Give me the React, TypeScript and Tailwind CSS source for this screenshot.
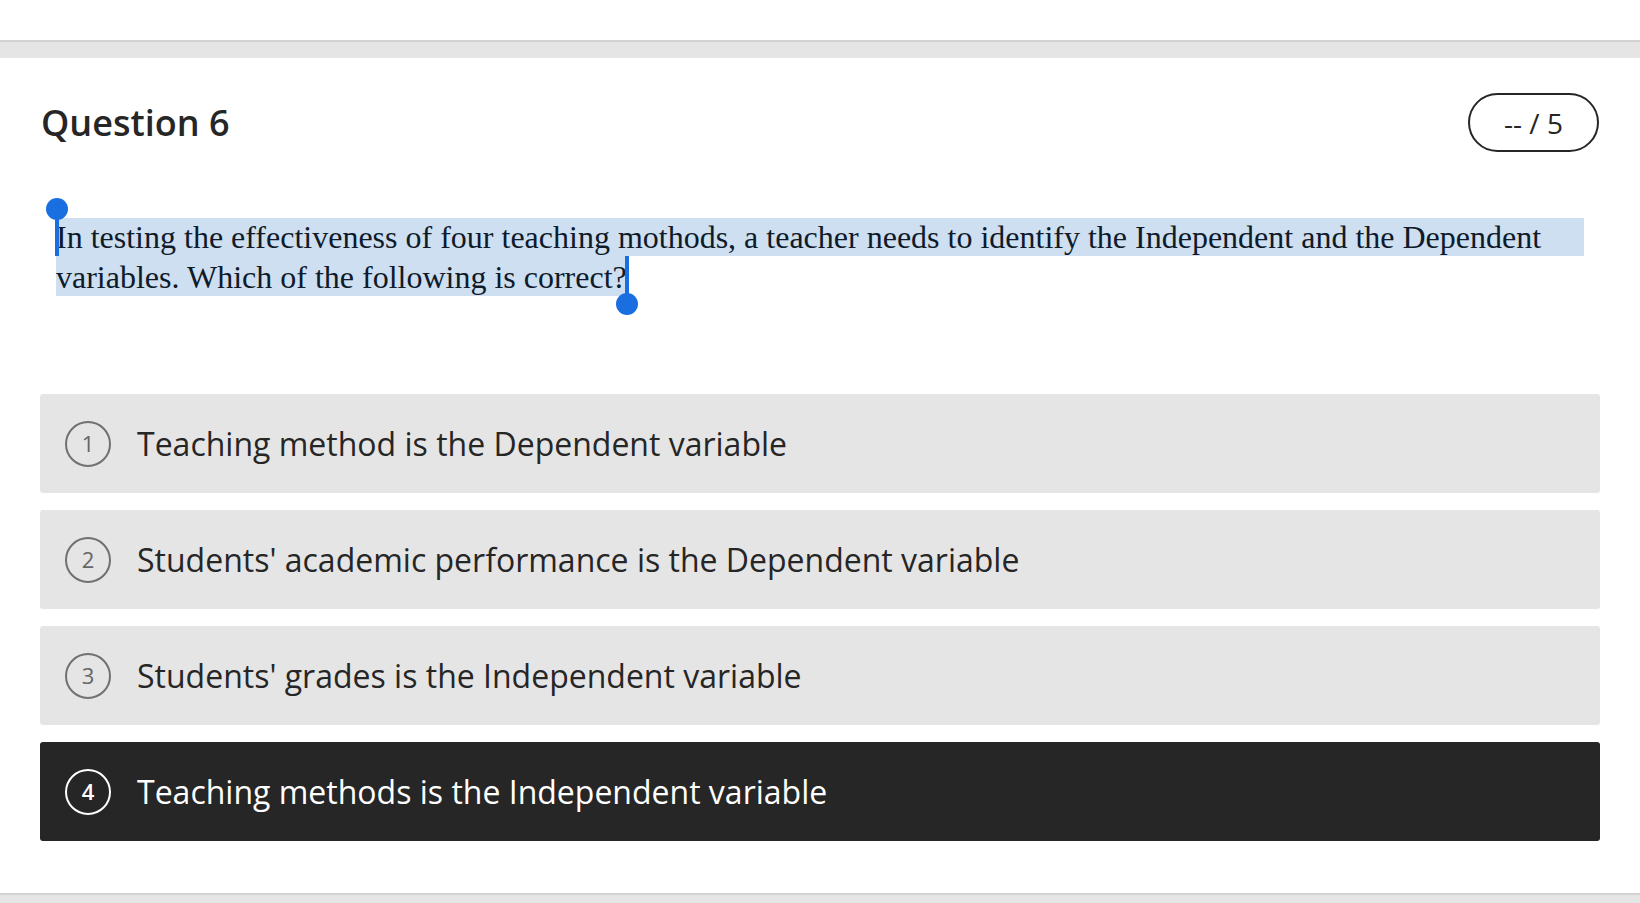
import React from "react";

const options = [
  { n: 1, text: "Teaching method is the Dependent variable" },
  { n: 2, text: "Students' academic performance is the Dependent variable" },
  { n: 3, text: "Students' grades is the Independent variable" },
  { n: 4, text: "Teaching methods is the Independent variable", selected: true },
];

function Option({ n, text, selected }: { n: number; text: string; selected?: boolean }) {
  return (
    <div
      className={`h-[99px] rounded-[3px] flex items-center pl-[25px] ${
        selected ? "bg-[#262626] text-white" : "bg-[#e5e5e5] text-[#262626]"
      }`}
    >
      <div
        className={`w-[46px] h-[46px] rounded-full border-2 flex items-center justify-center text-[22px] ${
          selected ? "border-white text-white font-semibold" : "border-[#707070] text-[#666666]"
        }`}
      >
        {n}
      </div>
      <span className="ml-[26px] text-[32px]">{text}</span>
    </div>
  );
}

export default function App() {
  return (
    <div
      className="w-[1640px] h-[903px] bg-white flex flex-col overflow-hidden"
      style={{ fontFamily: '"Open Sans", "Liberation Sans", sans-serif' }}
    >
      <div className="h-10 shrink-0" />
      <div className="h-[18px] shrink-0 bg-[#e5e5e5] border-t-2 border-[#d2d2d2]" />

      <div className="flex-1 px-10">
        {/* header */}
        <div className="flex items-center justify-between pt-[35px] pr-px">
          <h2 className="text-[36px] text-[#262626] font-semibold ml-px">Question 6</h2>
          <div className="w-[131px] h-[59px] rounded-full border-2 border-[#262626] flex items-center justify-center text-[28px] text-[#262626]">
            -- / 5
          </div>
        </div>

        {/* question text with selection */}
        <div
          className="relative mt-[66px] ml-4 text-[32px] leading-[39px] text-[#0f1a2a]"
          style={{ fontFamily: '"Liberation Serif", "Times New Roman", serif' }}
        >
          <div className="w-[1528px] h-[38px] bg-[#cddff0] whitespace-nowrap">
            In testing the effectiveness of four teaching mothods, a teacher needs to identify the Independent and the Dependent
          </div>
          <div className="inline-block h-[40px] leading-[42px] bg-[#cddff0] whitespace-nowrap pr-[1px]">
            variables. Which of the following is correct?
          </div>

          {/* selection handles */}
          <div className="absolute left-[-1px] top-[-9px] w-[4px] h-[47px] bg-[#1a6fe0]" />
          <div className="absolute left-[-10px] top-[-20px] w-[22px] h-[22px] rounded-full bg-[#1a6fe0]" />
          <div className="absolute left-[569px] top-[38px] w-[4px] h-[46px] bg-[#1a6fe0]" />
          <div className="absolute left-[560px] top-[75px] w-[22px] h-[22px] rounded-full bg-[#1a6fe0]" />
        </div>

        {/* options */}
        <div className="mt-[97px] flex flex-col gap-[17px]">
          {options.map((o) => (
            <Option key={o.n} {...o} />
          ))}
        </div>
      </div>

      <div className="h-[10px] shrink-0 bg-[#e5e5e5] border-t-2 border-[#d2d2d2]" />
    </div>
  );
}
